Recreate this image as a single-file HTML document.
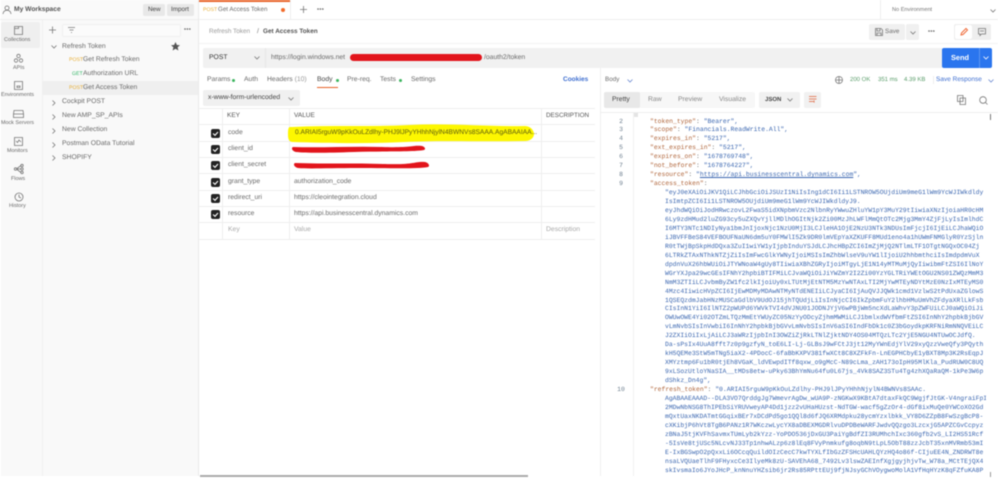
<!DOCTYPE html>
<html><head><meta charset="utf-8"><style>
html,body{margin:0;padding:0;background:#fff;width:998px;height:481px;overflow:hidden}
#p{position:relative;width:998px;height:481px;overflow:hidden;filter:blur(.4px);font-family:"Liberation Sans",sans-serif;font-size:6.8px;color:#6b6b6b;text-rendering:geometricPrecision}
#p div{position:absolute;white-space:nowrap}
.t{line-height:10px;height:10px}
.c{font-family:"Liberation Mono",monospace;font-size:6.4px;line-height:9px;height:9px;color:#3a66b0;left:665px;width:321px;overflow:hidden}
.j{left:650px;width:340px}
.k{color:#b0653a}
.n{font-family:"Liberation Mono",monospace;font-size:6.4px;line-height:9px;height:9px;color:#6f8090;width:12px;text-align:center;left:615px}
.d{color:#5f5f5f}
.cb{left:211px;width:9px;height:9px;background:#222;border-radius:2px}
.cb svg{position:absolute;left:0;top:0}
.post{color:#e8b13c;font-size:5.2px}
svg{position:absolute;overflow:visible;fill:none;stroke:#777;stroke-width:.8}
.r{background:#e2141b;border-radius:4px}
</style></head><body><div id="p">

<!-- sidebar -->
<div style="left:1px;top:20px;width:197px;height:456px;background:#f9f9f9"></div>
<div style="left:1px;top:0;width:197px;height:20px;background:#fafafa"></div>
<div style="left:0;top:19px;width:198px;height:1px;background:#eee"></div>
<div style="left:42px;top:20px;width:1px;height:456px;background:#f1f1f1"></div>
<div style="left:198px;top:0;width:1px;height:476px;background:#eaeaea"></div>
<div style="left:1px;top:22px;width:39px;height:26px;background:#efefef;border-radius:2px"></div>
<div style="left:42px;top:81px;width:156px;height:14px;background:#efefef"></div>

<svg style="left:2px;top:5px" width="10" height="10"><circle cx="5" cy="3" r="2"/><path d="M1 9c0-5 8-5 8 0"/></svg>
<div class="t" style="left:14px;top:5px;color:#555;font-size:6.7px;font-weight:bold">My Workspace</div>
<div style="left:143px;top:4px;width:22px;height:12px;background:#e8e8e8;border-radius:2px"></div>
<div class="t" style="left:148px;top:5px;font-size:6.3px;color:#444">New</div>
<div style="left:167px;top:4px;width:27px;height:12px;background:#e8e8e8;border-radius:2px"></div>
<div class="t" style="left:171px;top:5px;font-size:6.3px;color:#444">Import</div>

<!-- nav -->
<svg style="left:14px;top:26px" width="9" height="9"><path d="M.5.5h8v8h-8zM.5 2.5h4V.5"/></svg>
<div class="t" style="left:4px;top:35px;font-size:5.4px">Collections</div>
<svg style="left:14px;top:54px" width="9" height="9"><circle cx="4.5" cy="2" r="1.7"/><circle cx="2" cy="6.5" r="1.7"/><circle cx="7" cy="6.5" r="1.7"/></svg>
<div class="t" style="left:13px;top:63px;font-size:5.4px">APIs</div>
<svg style="left:14px;top:81px" width="9" height="10"><path d="M.5.5h8v8h-8zM3 5h3v1.5H3z"/></svg>
<div class="t" style="left:1px;top:90px;font-size:5.4px">Environments</div>
<svg style="left:13px;top:110px" width="11" height="8"><path d="M1 .5h9l.5 3.5v3.5H.5V4zM.5 4h10"/></svg>
<div class="t" style="left:1px;top:118px;font-size:5.4px">Mock Servers</div>
<svg style="left:14px;top:137px" width="9" height="9"><path d="M.5.5h8v8h-8zM2 4l1.500 1.500L5 3l2 2"/></svg>
<div class="t" style="left:7px;top:146px;font-size:5.4px">Monitors</div>
<svg style="left:14px;top:164px" width="10" height="10"><circle cx="1.500" cy="5" r="1.200"/><circle cx="8" cy="1.500" r="1.200"/><circle cx="8" cy="5" r="1.200"/><circle cx="8" cy="8.500" r="1.200"/><path d="M3 5h4M3 4.500l4-3M3 5.500l4 3"/></svg>
<div class="t" style="left:11px;top:174px;font-size:5.4px">Flows</div>
<svg style="left:14px;top:192px" width="10" height="10"><circle cx="5" cy="5" r="4"/><path d="M5 2.500V5l2 1"/></svg>
<div class="t" style="left:9px;top:201px;font-size:5.4px">History</div>

<!-- tree -->
<svg style="left:49px;top:26px" width="8" height="8"><path d="M0 4h7M3.500.5v7"/></svg>
<div style="left:62px;top:24px;width:117px;height:11px;background:#fbfbfb;border:1px solid #f0f0f0;border-radius:2px"></div>
<svg style="left:68px;top:27px" width="8" height="7"><path d="M0 .5h7M1.500 3h4M3 5.500h1"/></svg>
<div class="t" style="left:184px;top:25px;font-size:6px;letter-spacing:.3px">•••</div>
<svg style="left:51px;top:45px" width="6" height="4"><path d="M.5.500l2.500 2.500L5.500.500"/></svg>
<div class="t" style="left:62px;top:42px">Refresh Token</div>
<svg style="left:171px;top:42px" width="9" height="9"><path style="fill:#555;stroke:none" d="M4.500 0l1.400 3 3.100.3-2.400 2 .8 3.200-2.900-1.700L1.600 8.500l.8-3.200L0 3.300 3.100 3z"/></svg>
<div class="t post" style="left:69px;top:55px">POST</div>
<div class="t" style="left:83px;top:55px">Get Refresh Token</div>
<div class="t" style="left:72px;top:69px;color:#3ab96b;font-size:5.2px">GET</div>
<div class="t" style="left:83px;top:69px">Authorization URL</div>
<div class="t post" style="left:69px;top:83px">POST</div>
<div class="t" style="left:83px;top:83px">Get Access Token</div>
<svg style="left:52px;top:100px" width="4" height="6"><path d="M.5.500l2.500 2.500L.5 5.500"/></svg>
<div class="t" style="left:62px;top:97px">Cockpit POST</div>
<svg style="left:52px;top:114px" width="4" height="6"><path d="M.5.500l2.500 2.500L.5 5.500"/></svg>
<div class="t" style="left:62px;top:111px">New AMP_SP_APIs</div>
<svg style="left:52px;top:128px" width="4" height="6"><path d="M.5.500l2.500 2.500L.5 5.500"/></svg>
<div class="t" style="left:62px;top:125px">New Collection</div>
<svg style="left:52px;top:142px" width="4" height="6"><path d="M.5.500l2.500 2.500L.5 5.500"/></svg>
<div class="t" style="left:62px;top:139px">Postman OData Tutorial</div>
<svg style="left:52px;top:155px" width="4" height="6"><path d="M.5.500l2.500 2.500L.5 5.500"/></svg>
<div class="t" style="left:62px;top:153px">SHOPIFY</div>

<!-- tabs -->
<div style="left:199px;top:19px;width:799px;height:1px;background:#eee"></div>
<div style="left:199px;top:0;width:91px;height:1.500px;background:#e8632a"></div>
<div style="left:290px;top:0;width:1px;height:19px;background:#eee"></div>
<div class="t post" style="left:203px;top:5px">POST</div>
<div class="t" style="left:218px;top:5px;font-size:6.2px">Get Access Token</div>
<div style="left:281px;top:8px;width:4px;height:4px;border-radius:50%;background:#f26b2a"></div>
<svg style="left:300px;top:6px" width="7" height="7"><path d="M0 3.500h7M3.500 0v7"/></svg>
<div class="t" style="left:317px;top:5px;font-size:6px;letter-spacing:.3px">•••</div>
<div style="left:880px;top:0;width:1px;height:19px;background:#eee"></div>
<div class="t" style="left:892px;top:5px;font-size:5.6px;color:#777">No Environment</div>
<svg style="left:990px;top:9px" width="6" height="4"><path d="M.5.500l2.500 2.500L5.500.500"/></svg>

<!-- breadcrumb -->
<div class="t" style="left:209px;top:27px;color:#999;font-size:6.4px">Refresh Token</div>
<div class="t" style="left:257px;top:27px;color:#777">/</div>
<div class="t" style="left:263px;top:27px;color:#555;font-size:6.4px;font-weight:bold">Get Access Token</div>
<div style="left:869px;top:24px;width:36px;height:16px;background:#f0f0f0;border-radius:2px"></div>
<svg style="left:875px;top:28px" width="8" height="8"><path d="M.5.500h5.500l1.500 1.500v5.500h-7zM2 .5v2.500h3V.5M2 7.500V5h4v2.500"/></svg>
<div class="t" style="left:885px;top:27px;font-size:6.3px">Save</div>
<div style="left:906px;top:24px;width:13px;height:16px;background:#f0f0f0;border-radius:2px"></div>
<svg style="left:910px;top:31px" width="6" height="4"><path d="M.5.500l2.500 2.500L5.500.500"/></svg>
<div class="t" style="left:928px;top:27px;font-size:6px;letter-spacing:.3px">•••</div>
<div style="left:954px;top:24px;width:37px;height:16px;background:#eee;border-radius:2px"></div>
<div style="left:955px;top:25px;width:17px;height:14px;background:#fff;border-radius:2px"></div>
<svg style="left:960px;top:28px" width="8" height="8"><path style="stroke:#ef6b3a;stroke-width:1" d="M1 7l.5-2L6 .5l1.500 1.500L3 6.500z"/></svg>
<svg style="left:978px;top:28px" width="8" height="8"><path d="M.5.500h7v5.500h-4L2 7.500V6H.5zM2 3h4"/></svg>
<div style="left:199px;top:43px;width:799px;height:1px;background:#f3f3f3"></div>

<!-- url bar -->
<div style="left:203px;top:48px;width:740px;height:20px;background:#f1f1f1;border-radius:2px"></div>
<div style="left:265px;top:48px;width:1px;height:20px;background:#e6e6e6"></div>
<div class="t" style="left:209px;top:53px;color:#333;font-size:6.8px">POST</div>
<svg style="left:254px;top:56px" width="6" height="4"><path d="M.5.500l2.500 2.500L5.500.500"/></svg>
<div class="t" style="left:271px;top:53px">https://login.windows.net</div>
<div class="t" style="left:484px;top:53px">/oauth2/token</div>
<div class="r" style="left:350px;top:54px;width:132px;height:7px"></div>
<div style="left:942px;top:48px;width:50px;height:20px;background:#2a75ee;border-radius:2px"></div>
<div style="left:979px;top:48px;width:1px;height:20px;background:#5c95f2"></div>
<div class="t" style="left:951px;top:53px;color:#fff;font-size:7.4px;font-weight:bold">Send</div>
<svg style="left:983px;top:56px" width="6" height="4"><path style="stroke:#fff" d="M.5.500l2.500 2.500L5.500.500"/></svg>

<!-- request tabs -->
<div class="t" style="left:207px;top:75px">Params</div>
<div style="left:232px;top:79px;width:3px;height:3px;background:#3cb55f;border-radius:50%"></div>
<div class="t" style="left:244px;top:75px">Auth</div>
<div class="t" style="left:267px;top:75px">Headers <span style="color:#999">(10)</span></div>
<div class="t" style="left:317px;top:75px;color:#444">Body</div>
<div style="left:336px;top:79px;width:3px;height:3px;background:#3cb55f;border-radius:50%"></div>
<div style="left:317px;top:87px;width:21px;height:1px;background:#e8632a"></div>
<div class="t" style="left:347px;top:75px">Pre-req.</div>
<div class="t" style="left:380px;top:75px">Tests</div>
<div style="left:399px;top:79px;width:3px;height:3px;background:#3cb55f;border-radius:50%"></div>
<div class="t" style="left:411px;top:75px">Settings</div>
<div class="t" style="left:563px;top:75px;color:#3f6fd0;font-weight:bold;font-size:6.5px">Cookies</div>
<div style="left:203px;top:90px;width:97px;height:16px;background:#f0f0f0;border-radius:2px"></div>
<div class="t" style="left:208px;top:93px;color:#444">x-www-form-urlencoded</div>
<svg style="left:288px;top:97px" width="6" height="4"><path d="M.5.500l2.500 2.500L5.500.500"/></svg>

<!-- table -->
<div style="left:199px;top:108px;width:396px;height:1px;background:#eee"></div>
<div style="left:199px;top:124px;width:396px;height:1px;background:#eee"></div>
<div style="left:199px;top:141px;width:396px;height:1px;background:#eee"></div>
<div style="left:199px;top:157px;width:396px;height:1px;background:#eee"></div>
<div style="left:199px;top:173px;width:396px;height:1px;background:#eee"></div>
<div style="left:199px;top:190px;width:396px;height:1px;background:#eee"></div>
<div style="left:199px;top:206px;width:396px;height:1px;background:#eee"></div>
<div style="left:199px;top:222px;width:396px;height:1px;background:#eee"></div>
<div style="left:199px;top:239px;width:396px;height:1px;background:#eee"></div>
<div style="left:222px;top:108px;width:1px;height:131px;background:#eee"></div>
<div style="left:289px;top:108px;width:1px;height:131px;background:#eee"></div>
<div style="left:541px;top:108px;width:1px;height:131px;background:#eee"></div>
<div class="t" style="left:227px;top:111px;color:#555;font-size:6.5px">KEY</div>
<div class="t" style="left:294px;top:111px;color:#555;font-size:6.5px">VALUE</div>
<div class="t" style="left:546px;top:111px;color:#555;font-size:6.3px">DESCRIPTION</div>

<svg style="left:290px;top:124px;stroke:none" width="248" height="20"><path style="fill:#fdf700;stroke:none" d="M2 3C40 1 80 3 120 1c40-2 80 2 115 1 5 0 9 4 9 8s-4 7-9 7c-40 1-85-1-120 1-40 2-80 1-112 0-4 0-5-3-5-7s0-8 2-8z"/></svg>
<div class="t" style="left:295px;top:128px;color:#5b5a10;font-size:6.65px">0.ARIAI5rguW9pKkOuLZdlhy-PHJ9lJPyYHhhNjylN4BWNVs8SAAA.AgABAAIAA...</div>
<svg style="left:292px;top:145px;stroke:none" width="134" height="8"><path style="fill:#e2141b;stroke:none" d="M1 2C30 3 60 1 90 2s30-2 40-1c3 1 4 3 2 4-10 2-40 1-70 2S15 8 4 7C0 6-1 3 1 2z"/></svg>
<svg style="left:294px;top:161px;stroke:none" width="136" height="8"><path style="fill:#e2141b;stroke:none" d="M1 2c30 1 60 0 90 1s30-3 40-2c4 1 5 4 3 5-10 2-40 1-70 1S15 8 4 7C0 6-1 3 1 2z"/></svg>

<div class="cb" style="top:129px"><svg width="9" height="9"><path style="stroke:#fff;stroke-width:1.100" d="M2 4.500l2 1.800L7 3"/></svg></div>
<div class="cb" style="top:145px"><svg width="9" height="9"><path style="stroke:#fff;stroke-width:1.100" d="M2 4.500l2 1.800L7 3"/></svg></div>
<div class="cb" style="top:161px"><svg width="9" height="9"><path style="stroke:#fff;stroke-width:1.100" d="M2 4.500l2 1.800L7 3"/></svg></div>
<div class="cb" style="top:178px"><svg width="9" height="9"><path style="stroke:#fff;stroke-width:1.100" d="M2 4.500l2 1.800L7 3"/></svg></div>
<div class="cb" style="top:194px"><svg width="9" height="9"><path style="stroke:#fff;stroke-width:1.100" d="M2 4.500l2 1.800L7 3"/></svg></div>
<div class="cb" style="top:210px"><svg width="9" height="9"><path style="stroke:#fff;stroke-width:1.100" d="M2 4.500l2 1.800L7 3"/></svg></div>

<div class="t" style="left:228px;top:128px">code</div>
<div class="t" style="left:228px;top:144px">client_id</div>
<div class="t" style="left:228px;top:160px">client_secret</div>
<div class="t" style="left:228px;top:177px">grant_type</div>
<div class="t" style="left:228px;top:193px">redirect_uri</div>
<div class="t" style="left:228px;top:209px">resource</div>
<div class="t" style="left:228px;top:225px;color:#aaa">Key</div>
<div class="t" style="left:294px;top:177px">authorization_code</div>
<div class="t" style="left:294px;top:193px">https://cleointegration.cloud</div>
<div class="t" style="left:294px;top:209px">https://api.businesscentral.dynamics.com</div>
<div class="t" style="left:294px;top:225px;color:#aaa">Value</div>
<div class="t" style="left:546px;top:225px;color:#aaa">Description</div>

<!-- splitter -->
<div style="left:600px;top:68px;width:1px;height:408px;background:#f0f0f0"></div>

<!-- response header -->
<div class="t" style="left:605px;top:75px;font-size:6.3px">Body</div>
<svg style="left:627px;top:79px" width="6" height="4"><path style="stroke:#6c8ad0" d="M.5.500l2.500 2.500L5.500.500"/></svg>
<svg style="left:835px;top:76px" width="9" height="9"><circle cx="4" cy="4" r="3.500"/><path d="M.5 4h7M4 .5v7"/></svg>
<div class="t" style="left:850px;top:75px;color:#5a9d6a;font-size:6px">200 OK</div>
<div class="t" style="left:878px;top:75px;color:#5a9d6a;font-size:6px">351 ms</div>
<div class="t" style="left:904px;top:75px;color:#5a9d6a;font-size:6px">4.39 KB</div>
<div style="left:933px;top:76px;width:1px;height:8px;background:#eee"></div>
<div class="t" style="left:936px;top:75px;color:#3f6fd0;font-size:6.5px">Save Response</div>
<svg style="left:988px;top:79px" width="6" height="4"><path style="stroke:#6c8ad0" d="M.5.500l2.500 2.500L5.500.500"/></svg>

<div style="left:604px;top:92px;width:151px;height:16px;background:#f7f7f7;border-radius:2px"></div>
<div style="left:604px;top:92px;width:36px;height:16px;background:#e8e8e8;border-radius:2px"></div>
<div class="t" style="left:612px;top:95px;color:#444">Pretty</div>
<div class="t" style="left:648px;top:95px;color:#888">Raw</div>
<div class="t" style="left:678px;top:95px;color:#888">Preview</div>
<div class="t" style="left:719px;top:95px;color:#888">Visualize</div>
<div style="left:759px;top:92px;width:41px;height:16px;background:#f1f1f1;border-radius:2px"></div>
<div class="t" style="left:765px;top:95px;color:#444;font-size:6px;font-weight:bold">JSON</div>
<svg style="left:787px;top:98px" width="6" height="4"><path d="M.5.500l2.500 2.500L5.500.500"/></svg>
<div style="left:804px;top:92px;width:17px;height:16px;background:#f1f1f1;border-radius:2px"></div>
<svg style="left:809px;top:96px" width="8" height="7"><path style="stroke:#e0623a" d="M0 .5h7.500M0 3h7.500M0 5.500h4M5.500 4.500L4.500 5.500l1 1"/></svg>
<svg style="left:957px;top:95px" width="9" height="10"><path d="M.5.500h5.500v6H.5zM3 3h5.500v6.500H3z"/></svg>
<svg style="left:979px;top:96px" width="9" height="9"><circle cx="4" cy="4" r="3.300"/><path d="M6.500 6.500l2 2"/></svg>

<!-- code -->
<div style="left:600px;top:112px;width:398px;height:1px;background:#eee"></div>
<div style="left:633px;top:113px;width:1px;height:363px;background:#f2f2f2"></div>
<div style="left:634px;top:113px;width:4px;height:4px;background:#e4e4e4"></div>
<div style="left:990px;top:114px;width:1px;height:6px;background:#777"></div>
<div style="left:990px;top:472px;width:1px;height:6px;background:#999"></div>

<div class="n" style="top:116.500px">2</div><div class="c j" style="top:116.500px"><span class="k">"token_type"</span><span class="d">:</span> "Bearer",</div>
<div class="n" style="top:125.450px">3</div><div class="c j" style="top:125.450px"><span class="k">"scope"</span><span class="d">:</span> "Financials.ReadWrite.All",</div>
<div class="n" style="top:134.400px">4</div><div class="c j" style="top:134.400px"><span class="k">"expires_in"</span><span class="d">:</span> "5217",</div>
<div class="n" style="top:143.350px">5</div><div class="c j" style="top:143.350px"><span class="k">"ext_expires_in"</span><span class="d">:</span> "5217",</div>
<div class="n" style="top:152.300px">6</div><div class="c j" style="top:152.300px"><span class="k">"expires_on"</span><span class="d">:</span> "1678769748",</div>
<div class="n" style="top:161.250px">7</div><div class="c j" style="top:161.250px"><span class="k">"not_before"</span><span class="d">:</span> "1678764227",</div>
<div class="n" style="top:170.200px">8</div><div class="c j" style="top:170.200px"><span class="k">"resource"</span><span class="d">:</span> "<u>https://api.businesscentral.dynamics.com</u>",</div>
<div class="n" style="top:179.150px">9</div><div class="c j" style="top:179.150px"><span class="k">"access_token"</span><span class="d">:</span></div>

<div class="c" style="top:188.100px">"eyJ0eXAiOiJKV1QiLCJhbGciOiJSUzI1NiIsIng1dCI6Ii1LSTNROW5OUjdiUm9meG1lWm9YcWJIWkdldy</div>
<div class="c" style="top:197.050px">IsImtpZCI6Ii1LSTNROW5OUjdiUm9meG1lWm9YcWJIWkdldyJ9.</div>
<div class="c" style="top:206px">eyJhdWQiOiJodHRwczovL2FwaS5idXNpbmVzc2NlbnRyYWwuZHluYW1pY3MuY29tIiwiaXNzIjoiaHR0cHM</div>
<div class="c" style="top:214.950px">6Ly9zdHMud2luZG93cy5uZXQvYjllMDlhOGItNjk2Zi00MzJhLWFlMmQtOTc2Mjg3MmY4ZjFjLyIsImlhdC</div>
<div class="c" style="top:223.900px">I6MTY3NTc1NDIyNya1bmJnIjoxNjc1NzU0MjI3LCJleHA1OjE2NzU3NTk3NDUsImFjcjI6IjEiLCJhaWQiO</div>
<div class="c" style="top:232.850px">iJBVFFBeS84VEFBOUFNaUN6dm5uY0FMWlI5Zk9DR0lmVEpYaXZKUFF8MUd1eno4a1hUWmFNMGlyR0YzSjln</div>
<div class="c" style="top:241.800px">R0tTWjBpSkpHdDQxa3ZuI1wiYW1yIjpbInduYSJdLCJhcHBpZCI6ImZjMjQ2NTlmLTF1OTgtNGQxOC04Zj</div>
<div class="c" style="top:250.750px">6LTRkZTAxNThkNTZjZiIsImFwcGlkYWNyIjoiMSIsImZhbWlseV9uYW1lIjoiU2hhbmthciIsImdpdmVuX</div>
<div class="c" style="top:259.700px">dpdnVuX26hbWUiOiJTYWNoaW4gUy8TIiwiaXBhZGRyIjoiMTgyLjE1N14yMTMuMjQyIiwibmFtZSI6IlNoY</div>
<div class="c" style="top:268.650px">WGrYXJpa29wcGEsIFNhY2hpbiBTIFMiLCJvaWQiOiJiYWZmY2I2Zi00YzYGLTRiYWEtOGU2NS01ZWQzMmM3</div>
<div class="c" style="top:277.600px">NmM3ZTIiLCJvbmByZW1fc2lkIjoiUy0xLTUtMjEtNTM5MzYwNTAxLTI2MjYwMTEyNDYtMzE0NzIxMTEyMS0</div>
<div class="c" style="top:286.550px">4Mzc4IiwicHVpZCI6IjEwMDMyMDAwNTMyNTdENEIiLCJyaCI6IjAuQVJJQWk1cmd1VzlwS2tPdUxaZGlowS</div>
<div class="c" style="top:295.500px">1QSEQzdmJabHNzMUSCaGdlbV9UdOJ15jhTQUdjLiIsInNjcCI6IkZpbmFuY2lhbHMuUmVhZFdyaXRlLkFsb</div>
<div class="c" style="top:304.450px">CIsInN1YiI6IlNTZ2pWUPd6YWVkTVI4dVJNU01JODNJYjV6wPBjWm5ncXdLaWhvY3pZWFUiLCJ0aWQiOiJi</div>
<div class="c" style="top:313.400px">OWUwOWE4Yi02OTZmLTQzMmEtYWUyZC05NzYyODcyZjhmMWMiLCJ1bmlxdWVfbmFtZSI6InNhY2hpbkBjbGV</div>
<div class="c" style="top:322.350px">vLmNvbSIsInVwbiI6InNhY2hpbkBjbGVvLmNvbSIsInV6aSI6IndFbDk1c0Z3bGoydkpKRFNiRmNNQVEiLC</div>
<div class="c" style="top:331.300px">J2ZXIiOiIxLjAiLCJ3aWRzIjpbInI3OWZiZjRkLTNlZjktNDY4OS04MTQzLTc2YjE5NGU4NTUwOCJdfQ.</div>
<div class="c" style="top:340.250px">Da-sPsIx4UuA8fft7z0p9gzfyN_toE6LI-Lj-GLBsJ9wFCtJ3jt12MyYWnEdjYlV29xyQzzVweQfy3PQyth</div>
<div class="c" style="top:349.200px">kH5QEMe3StW5mTNg5iaX2-4PDocC-6faBbKXPV381fwXCt8C8XZFkFn-LnEGPHCbyE1yBXT8Mp3K2RsEqpJ</div>
<div class="c" style="top:358.150px">XMYztmp6Fu1bR0tjEh8VGaK_ldVEwpdITf8qxw_o9gMcC-N89cLma_zAH173oIpH95MlKla_PudRUW0C8UQ</div>
<div class="c" style="top:367.100px">9xLSozUtloYNaSIA__tMDs8etw-uPky63BhYmNu64fu0L67js_4Vk8SAZ3STu4Tg4zhXQaRaQM-1kPe3W6p</div>
<div class="c" style="top:376.050px">dShkz_Dn4g",</div>

<div class="n" style="top:385px">10</div><div class="c j" style="top:385px"><span class="k">"refresh_token"</span><span class="d">:</span> "0.ARIAI5rguW9pKkOuLZdlhy-PHJ9lJPyYHhhNjylN4BWNVs8SAAc.</div>
<div class="c" style="top:393.950px">AgABAAEAAAD--DLA3VO7QrddgJg7WmevrAgDw_wUA9P-zNGKwX9KBtA7dtaxFkQC9WgjfJtGK-V4ngraiFpI</div>
<div class="c" style="top:402.900px">2MDwNbNSG8ThIPEbSiYRUVweyAP4Dd1jzz2vUHaHUzst-NdTGW-wacf5gZzOr4-dGf8ixMuQe0YWCoXO2Gd</div>
<div class="c" style="top:411.850px">mQxtUaxNKDATmtGGqixBEr7xDCdPd5go1QQl8d6fJQ6XRMdpku28ycmYzxlbkk_VY8D6ZZpB8FwSzgBcP8-</div>
<div class="c" style="top:420.800px">cXKibjP6hVt8TgB6PANz1R7WKczwLycYX8aDBEXMGDRlvuDPDBeWARFJwdvQQzgo3LzcxjG5APZCGvCcpyz</div>
<div class="c" style="top:429.750px">zBNaJ5tjKVFhSavmxTUmLyb2kYzz-YoPDO536jDxGU3PaiYgBdfZI3RUMhchIxc360gfb2vS_LI2HS51Rcf</div>
<div class="c" style="top:438.700px">-5IsVe8tjUSc5NLcvNJ33Tp1nhwALzp6z8lEq8FVyPnmkufg8oqbN9tLpL5ObT88zzJcbT35xnMVRmb53mI</div>
<div class="c" style="top:447.650px">E-IxBGSwpO2pQxxLi6OCcqQuildOIzCecC7kwTYXLfIbGzZFSHcUAHLQYzHQ4o86f-CIjuEE4N_ZNDRWT8e</div>
<div class="c" style="top:456.600px">nsaLVQUaeTlhF9FHyxcCe3IlyeMk8zU-SAVEhA68_7492Lv3lswZAEInfXgjgyjhjvTw_W78a_MCtTEjQX4</div>
<div class="c" style="top:465.550px">skIvsmaIo6JYoJHcP_knNnuYHZsib6jr2Rs85RPttEUj9fjNJsyGChVOygwoMolA1VfHqHYzK8qFZfuKA8P</div>

<div style="left:200px;top:475px;width:328px;height:1.500px;background:#aaa"></div>
<div style="left:0;top:477px;width:998px;height:4px;background:#fff"></div>
</div></body></html>
